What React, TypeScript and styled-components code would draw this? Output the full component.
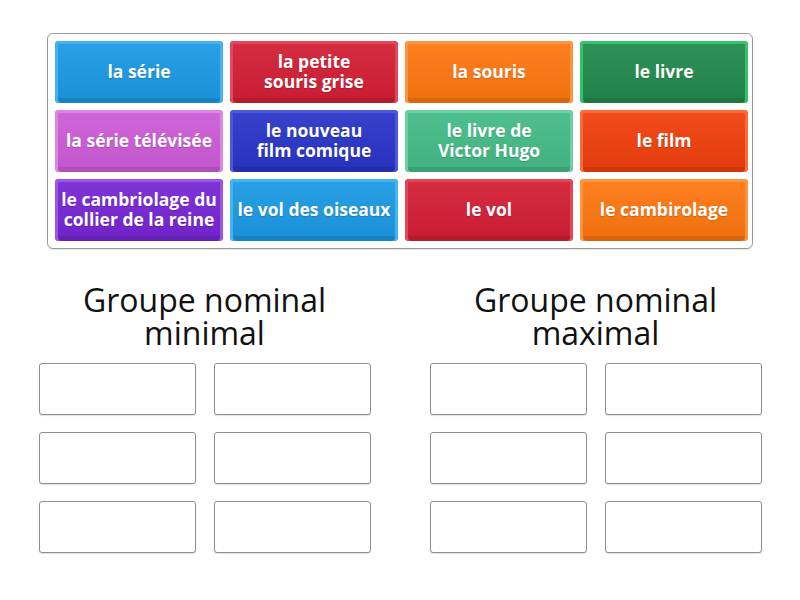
import React from "react";
import styled, { createGlobalStyle } from "styled-components";

const GlobalStyle = createGlobalStyle`
  html, body {
    margin: 0;
    padding: 0;
    background: #fff;
  }
  body {
    font-family: "Open Sans", "Noto Sans", Arial, sans-serif;
  }
`;

interface ITile {
  label: string;
  bg: string;
  ring: string;
}

const tiles: ITile[] = [
  { label: "la série", bg: "#1c99e4", ring: "#45b3ef" },
  { label: "la petite\nsouris grise", bg: "#d31f36", ring: "#e2475a" },
  { label: "la souris", bg: "#fd7711", ring: "#ff9440" },
  { label: "le livre", bg: "#228a4b", ring: "#33c46a" },
  { label: "la série télévisée", bg: "#cc5cd6", ring: "#dc86e3" },
  { label: "le nouveau\nfilm comique", bg: "#2a35c8", ring: "#4d58dc" },
  { label: "le livre de\nVictor Hugo", bg: "#45bb87", ring: "#6fcfa4" },
  { label: "le film", bg: "#f0400e", ring: "#ff6a3a" },
  { label: "le cambriolage du\ncollier de la reine", bg: "#7826d4", ring: "#9b57e4" },
  { label: "le vol des oiseaux", bg: "#1c99e4", ring: "#45b3ef" },
  { label: "le vol", bg: "#d31f36", ring: "#e2475a" },
  { label: "le cambirolage", bg: "#fd7711", ring: "#ff9440" },
];

const groups = ["Groupe nominal\nminimal", "Groupe nominal\nmaximal"];

export default function App() {
  return (
    <>
      <GlobalStyle />
      <Page>
        <TileBoard>
          {tiles.map((t, i) => (
            <Tile key={i} $bg={t.bg} $ring={t.ring}>
              <TileLabel>{t.label}</TileLabel>
            </Tile>
          ))}
        </TileBoard>
        <Groups>
          {groups.map((g) => (
            <Group key={g}>
              <GroupTitle>{g}</GroupTitle>
              <DropGrid>
                {Array.from({ length: 6 }).map((_, i) => (
                  <DropSlot key={i} />
                ))}
              </DropGrid>
            </Group>
          ))}
        </Groups>
      </Page>
    </>
  );
}

const Page = styled.main`
  width: 800px;
  height: 600px;
  padding-top: 33px;
  box-sizing: border-box;
  display: flex;
  flex-direction: column;
  align-items: center;
`;

const TileBoard = styled.section`
  width: 706px;
  box-sizing: border-box;
  padding: 7px;
  border: 1px solid #9a9a9a;
  border-radius: 6px;
  display: grid;
  grid-template-columns: repeat(4, 168px);
  grid-auto-rows: 62px;
  gap: 7px;
  box-shadow: 0 1px 1px rgba(0, 0, 0, 0.12);
`;

const Tile = styled.div<{ $bg: string; $ring: string }>`
  position: relative;
  border-radius: 4px;
  background: ${(p) => p.$bg};
  box-shadow:
    inset 0 3px 0 ${(p) => p.$ring},
    inset 3px 0 0 ${(p) => p.$ring},
    inset -3px 0 0 ${(p) => p.$ring},
    inset 0 -5px 0 rgba(0, 0, 0, 0.14);
  display: flex;
  align-items: center;
  justify-content: center;
  padding: 0 2px 2px;
  overflow: hidden;

  &::after {
    content: "";
    position: absolute;
    left: 3px;
    right: 3px;
    top: 3px;
    bottom: 5px;
    background: linear-gradient(to bottom, rgba(255, 255, 255, 0.06), rgba(0, 0, 0, 0.05));
    pointer-events: none;
  }
`;

const TileLabel = styled.span`
  position: relative;
  z-index: 1;
  color: #fff;
  font-family: "Open Sans", "Noto Sans", sans-serif;
  font-weight: 700;
  font-size: 17.5px;
  line-height: 20px;
  text-align: center;
  white-space: pre-line;
  text-shadow: 0 1px 1px rgba(0, 0, 0, 0.15);
`;

const Groups = styled.section`
  margin-top: 34px;
  display: grid;
  grid-template-columns: 332px 332px;
  gap: 59px;
`;

const Group = styled.div`
  display: flex;
  flex-direction: column;
  align-items: center;
`;

const GroupTitle = styled.h2`
  margin: 0 0 14px;
  font-family: "Open Sans", "Noto Sans", sans-serif;
  font-weight: 400;
  font-size: 32px;
  line-height: 33px;
  color: #111;
  text-align: center;
  white-space: pre-line;
`;

const DropGrid = styled.div`
  display: grid;
  grid-template-columns: 157px 157px;
  grid-auto-rows: 52px;
  column-gap: 18px;
  row-gap: 17px;
`;

const DropSlot = styled.div`
  box-sizing: border-box;
  border: 1px solid #8e8e8e;
  border-radius: 3px;
  background: #fff;
  box-shadow: 0 1px 1px rgba(0, 0, 0, 0.12);
`;
